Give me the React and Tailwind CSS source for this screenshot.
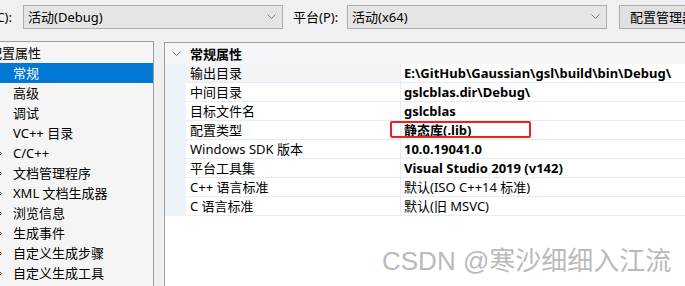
import React from 'react';

const font = { fontFamily: '"Noto Sans", "Noto Sans CJK SC", sans-serif' };

function Chevron() {
  return (
    <svg width="9" height="6" viewBox="0 0 9 6" className="shrink-0">
      <polyline points="0.5,0.5 4.5,4.5 8.5,0.5" fill="none" stroke="#7a7a7a" strokeWidth="1" />
    </svg>
  );
}

function Combo({ text, width }) {
  return (
    <div className={`shrink-0 h-[24px] ${width} bg-[#e5e5e5] border border-[#adadad] flex items-center justify-between pl-[4px] pr-[6px]`}>
      <span className="whitespace-nowrap">{text}</span>
      <Chevron />
    </div>
  );
}

function Expander() {
  return (
    <svg width="6" height="9" viewBox="0 0 6 9" className="shrink-0">
      <polyline points="0.5,0.5 4.5,4.5 0.5,8.5" fill="none" stroke="#555" strokeWidth="1" />
    </svg>
  );
}

const tree = [
  { label: '常规', selected: true },
  { label: '高级' },
  { label: '调试' },
  { label: 'VC++ 目录' },
  { label: 'C/C++', exp: true },
  { label: '文档管理程序', exp: true },
  { label: 'XML 文档生成器', exp: true },
  { label: '浏览信息', exp: true },
  { label: '生成事件', exp: true },
  { label: '自定义生成步骤', exp: true },
  { label: '自定义生成工具', exp: true },
];

const props = [
  { name: '输出目录', value: 'E:\\GitHub\\Gaussian\\gsl\\build\\bin\\Debug\\', bold: true, active: true },
  { name: '中间目录', value: 'gslcblas.dir\\Debug\\', bold: true },
  { name: '目标文件名', value: 'gslcblas', bold: true },
  { name: '配置类型', value: '静态库(.lib)', bold: true },
  { name: 'Windows SDK 版本', value: '10.0.19041.0', bold: true },
  { name: '平台工具集', value: 'Visual Studio 2019 (v142)', bold: true },
  { name: 'C++ 语言标准', value: '默认(ISO C++14 标准)' },
  { name: 'C 语言标准', value: '默认(旧 MSVC)' },
];

export default function App() {
  return (
    <div className="w-[685px] h-[286px] bg-[#f0f0f0] overflow-hidden relative text-[13px] leading-[18px] text-black" style={font}>
      {/* Top bar */}
      <div className="h-[41px] flex items-start pt-[5px]">
        <div className="shrink-0 w-[23px] h-[24px] overflow-hidden flex justify-end items-center pr-[11px]">
          <span className="whitespace-nowrap">配置(C):</span>
        </div>
        <Combo text="活动(Debug)" width="w-[260px]" />
        <div className="shrink-0 w-[64px] h-[24px] flex items-center pl-[10px]">
          <span className="whitespace-nowrap">平台(P):</span>
        </div>
        <Combo text="活动(x64)" width="w-[260px]" />
        <div className="shrink-0 ml-[12px] h-[24px] w-[90px] bg-[#e1e1e1] border border-[#adadad] flex items-center pl-[10px]">
          <span className="whitespace-nowrap">配置管理器</span>
        </div>
      </div>

      {/* Main */}
      <div className="flex h-[245px]">
        <div className="shrink-0 w-[154px] bg-[#f5f5f5] border-t border-r border-[#a0a0a0] overflow-hidden">
          <div className="h-[21px] flex items-center -ml-[11px] pt-[1px]">
            <span className="whitespace-nowrap">配置属性</span>
          </div>
          {tree.map((t) => (
            <div
              key={t.label}
              className={`h-[20px] flex items-center ${t.selected ? 'bg-[#0078d4] text-white' : ''}`}
            >
              <div className="w-[13px] flex items-center -ml-[3px]">{t.exp && <Expander />}</div>
              <span className="whitespace-nowrap ml-[3px]">{t.label}</span>
            </div>
          ))}
        </div>

        <div className="ml-[10px] mt-[1px] flex-1 bg-white border-t border-l border-[#a0a0a0] overflow-hidden">
          <div className="h-[21px] flex items-center bg-[#f4f6fa]">
            <div className="w-[21px] flex justify-center pl-[2px]">
              <Chevron />
            </div>
            <span className="font-bold whitespace-nowrap ml-[4px]">常规属性</span>
          </div>
          {props.map((p) => (
            <div key={p.name} className="h-[19px] flex">
              <div className="w-[21px] bg-[#eef2f9]" />
              <div
                className={`w-[214px] flex items-center pl-[4px] border-b border-[#e6ecf5] ${p.active ? 'bg-[#f2f4f8]' : 'bg-white'}`}
              >
                <span className="whitespace-nowrap">{p.name}</span>
              </div>
              <div className="flex-1 flex items-center pl-[3px] border-b border-l border-[#e6ecf5] bg-white">
                <span className={`whitespace-nowrap ${p.bold ? 'font-bold' : ''}`}>{p.value}</span>
              </div>
            </div>
          ))}
        </div>
      </div>

      {/* Highlight box */}
      <div className="absolute left-[390px] top-[121px] w-[141px] h-[17px] border-2 border-[#e8221c] rounded-[2px]" />

      {/* Watermark */}
      <div
        className="absolute left-[382px] top-[246px] text-[26px] leading-[30px] text-[#bababa] whitespace-nowrap"
        style={{ fontFamily: '"Liberation Sans", "Noto Sans CJK SC", sans-serif' }}
      >
        CSDN @寒沙细细入江流
      </div>
    </div>
  );
}
